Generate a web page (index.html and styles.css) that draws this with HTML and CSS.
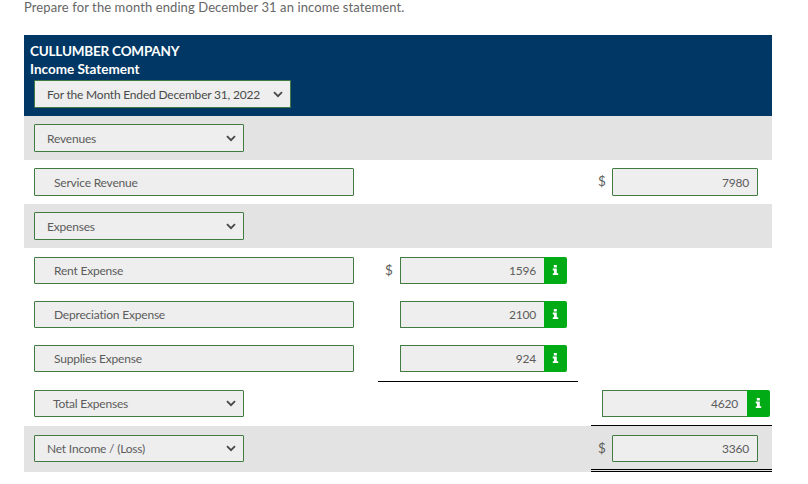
FILE: index.html
```html
<!DOCTYPE html>
<html>

<head>
	<meta charset="utf-8">
	<title>Income Statement</title>
	<link rel="stylesheet" href="styles.css">
</head>

<body>
	<svg class="defs" width="0" height="0">
		<symbol id="chev" viewBox="0 0 10 7">
			<path d="M1 1.2 L5 5.2 L9 1.2" fill="none" stroke="#484848" stroke-width="1.8" />
		</symbol>
		<symbol id="info" viewBox="0 0 7 10">
			<path d="M1.8 0h3v2.4h-3zM.8 3.6h4v4.6h1.4V10H.8V8.2h1.2V5.4H.8z" fill="#fff" />
		</symbol>
	</svg>
	<p class="prompt">Prepare for the month ending December 31 an income statement.</p>
	<div class="sheet">
		<div class="head">
			<div class="company">CULLUMBER COMPANY</div>
			<div class="title">Income Statement</div>
			<div class="select period"><span>For the Month Ended December 31, 2022</span><svg class="chev"><use href="#chev" /></svg></div>
		</div>

		<div class="row shade">
			<div class="label"><div class="select"><span>Revenues</span><svg class="chev"><use href="#chev" /></svg></div></div>
		</div>

		<div class="row">
			<div class="label"><div class="field name">Service Revenue</div></div>
			<div class="mid"></div>
			<div class="end"><span class="cur">$</span><div class="field num">7980</div></div>
		</div>

		<div class="row shade">
			<div class="label"><div class="select"><span>Expenses</span><svg class="chev"><use href="#chev" /></svg></div></div>
		</div>

		<div class="row slim low">
			<div class="label"><div class="field name">Rent Expense</div></div>
			<div class="mid"><span class="cur">$</span><div class="field num joined">1596</div><div class="tip"><svg class="i"><use href="#info" /></svg></div></div>
		</div>

		<div class="row slim low r45">
			<div class="label"><div class="field name">Depreciation Expense</div></div>
			<div class="mid"><span class="cur"></span><div class="field num joined">2100</div><div class="tip"><svg class="i"><use href="#info" /></svg></div></div>
		</div>

		<div class="row slim r45">
			<div class="label"><div class="field name">Supplies Expense</div></div>
			<div class="mid under"><span class="cur"></span><div class="field num joined">924</div><div class="tip"><svg class="i"><use href="#info" /></svg></div></div>
		</div>

		<div class="row slim">
			<div class="label"><div class="select indent"><span>Total Expenses</span><svg class="chev"><use href="#chev" /></svg></div></div>
			<div class="mid"></div>
			<div class="end under total"><div class="field num joined">4620</div><div class="tip"><svg class="i"><use href="#info" /></svg></div></div>
		</div>

		<div class="row slim low shade last">
			<div class="label"><div class="select"><span>Net Income / (Loss)</span><svg class="chev"><use href="#chev" /></svg></div></div>
			<div class="mid"></div>
			<div class="end double"><span class="cur">$</span><div class="field num">3360</div></div>
		</div>
	</div>
</body>

</html>
```

FILE: styles.css
```css
html,
body {
	height: 100%;
}

body {
	margin: 0;
	height: 484px;
	overflow: hidden;
	background: #fff;
	font-family: Lato, "Open Sans", sans-serif;
	font-size: 12px;
	color: #5c5c5c;
}

.defs {
	position: absolute;
}

.prompt {
	margin: 0;
	padding-left: 24px;
	height: 35px;
	font-size: 13px;
	line-height: 14px;
	letter-spacing: .1px;
	color: #666;
}

.sheet {
	margin: 0 36px 0 24px;
}

.head {
	height: 81px;
	box-sizing: border-box;
	padding: 7px 0 0 6px;
	background: #003764;
	color: #fff;
	font-weight: 700;
}

.company,
.title {
	height: 18px;
	line-height: 18px;
	font-size: 13.5px;
}

.company {
	letter-spacing: -.2px;
}

.head .period {
	width: 257px;
	margin: 2px 0 0 4px;
	padding-right: 7px;
	color: #4a4a4a;
	font-weight: 400;
}

.row {
	display: flex;
	height: 44px;
	box-sizing: border-box;
}

.r45 {
	height: 45px;
}

.shade {
	background: #e3e3e3;
}

.last {
	height: 46px;
}

.label {
	width: 354px;
	flex: none;
	box-sizing: border-box;
	padding: 8px 24px 0 10px;
}

.select,
.field {
	display: flex;
	align-items: center;
	height: 28px;
	box-sizing: border-box;
	background: #eee;
	border: 1px solid #417b41;
	border-radius: 1px;
	letter-spacing: -.2px;
}

.select {
	width: 210px;
	padding: 0 7px 0 12px;
	justify-content: space-between;
}

.indent {
	padding-left: 18px;
}

.chev {
	width: 10px;
	height: 7px;
}

.name {
	padding-left: 19px;
}

.mid {
	width: 200px;
	flex: none;
	display: flex;
	box-sizing: border-box;
	padding: 8px 0 0 7px;
}

.end {
	width: 181px;
	margin-left: 13px;
	flex: none;
	display: flex;
	box-sizing: border-box;
	padding: 8px 14px 0 7px;
}

.cur {
	width: 15px;
	flex: none;
	font-size: 13.5px;
	line-height: 26px;
}

.end .cur {
	width: 14px;
}

.num {
	flex: 1;
	justify-content: flex-end;
	padding-right: 8px;
}

.joined {
	flex: none;
	width: 144px;
	border-right: 0;
	border-radius: 1px 0 0 1px;
}

.tip {
	display: flex;
	align-items: center;
	justify-content: center;
	width: 23px;
	height: 28px;
	background: #00ab16;
	border-radius: 0 2px 2px 0;
}

.i {
	width: 7px;
	height: 10px;
	margin-top: -2px;
}

.slim .select,
.slim .field,
.slim .tip {
	height: 27px;
}

.low .label,
.low .mid,
.low .end {
	padding-top: 9px;
}

.under {
	border-bottom: 1px solid #000;
}

.total {
	padding: 8px 2px 0 11px;
}

.total .joined {
	width: 145px;
	padding-right: 9px;
}

.double {
	border-bottom: 3px double #000;
}
```
